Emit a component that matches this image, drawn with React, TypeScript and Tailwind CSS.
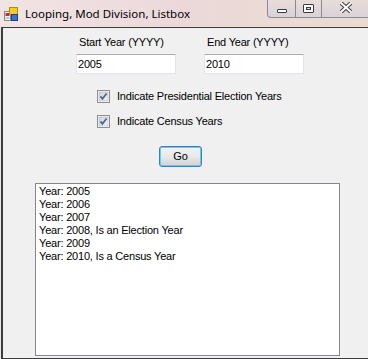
import React from "react";

const ui = { fontFamily: '"Liberation Sans", Arial, sans-serif' };

function AppIcon() {
  return (
    <svg width="14" height="14" viewBox="0 0 14 14" className="shrink-0">
      <rect x="0.5" y="4.5" width="6" height="9" fill="#f4f4f4" stroke="#8a8a8a" />
      <rect x="1.5" y="6" width="4" height="3" fill="#d42a1e" />
      <rect x="1.5" y="10" width="4" height="2" fill="#c8c8c8" />
      <rect x="5.5" y="0.5" width="8" height="7" fill="#f6c928" stroke="#b48a10" />
      <rect x="7.5" y="7.5" width="6" height="6" fill="#3b6fd8" stroke="#1f3f8a" />
    </svg>
  );
}

function CheckBox({ label }: { label: string }) {
  return (
    <div className="flex h-[13px] items-center">
      <svg width="13" height="13" viewBox="0 0 13 13" className="shrink-0">
        <defs>
          <linearGradient id="cbg" x1="0" y1="0" x2="1" y2="1">
            <stop offset="0" stopColor="#cfd2d6" />
            <stop offset="1" stopColor="#f4f5f7" />
          </linearGradient>
        </defs>
        <rect x="0.5" y="0.5" width="12" height="12" fill="#fff" stroke="#8e8f8f" />
        <rect x="2" y="2" width="9" height="9" fill="url(#cbg)" stroke="#aeb3b9" strokeWidth="0.6" />
        <path d="M3.4 6.4 L5.4 8.8 L9.6 3.4" fill="none" stroke="#4c61a0" strokeWidth="1.7" />
      </svg>
      <span className="ml-[7px] text-[11px] leading-[13px] tracking-[-0.2px] text-black">{label}</span>
    </div>
  );
}

function TextField({ value }: { value: string }) {
  return (
    <div className="flex h-[20px] w-[100px] items-center border border-[#e2e3ea] border-t-[#abadb3] bg-white pl-[1px] text-[11px] tracking-[-0.2px] text-black">
      {value}
    </div>
  );
}

const items = [
  "Year: 2005",
  "Year: 2006",
  "Year: 2007",
  "Year: 2008, Is an Election Year",
  "Year: 2009",
  "Year: 2010, Is a Census Year",
];

export default function App() {
  return (
    <div
      className="flex h-[359px] w-[368px] flex-col overflow-hidden bg-gradient-to-r from-[#f1e4e5] via-[#ecd8da] to-[#e9dccf]"
      style={ui}
    >
      <div className="relative flex h-[27px] shrink-0 items-center pl-[4px]">
        <AppIcon />
        <span
          className="ml-[7px] text-[11.5px] text-black"
          style={{ fontFamily: '"Noto Sans", "Open Sans", sans-serif' }}
        >
          Looping, Mod Division, Listbox
        </span>
        <div className="absolute left-[267px] top-0 flex h-[18px] w-[110px] overflow-hidden rounded-b-[4px] border border-t-0 border-[#8a8a90] bg-gradient-to-b from-[#e9dde2]/60 to-[#d2cedb]/70">
          <div className="flex w-[28px] items-center justify-center border-r border-[#8a8a90]">
            <div className="mt-[5px] h-[4px] w-[10px] rounded-[1px] border border-[#3b3b3b] bg-white" />
          </div>
          <div className="flex w-[26px] items-center justify-center border-r border-[#8a8a90]">
            <div className="flex h-[9px] w-[11px] items-center justify-center rounded-[1px] border border-[#3b3b3b] bg-white">
              <div className="h-[3px] w-[5px] border border-[#3b3b3b] bg-[#d8d8d8]" />
            </div>
          </div>
          <div className="flex flex-1 items-start justify-start pl-[18px] pt-[2px]">
            <svg width="12" height="11" viewBox="0 0 12 11">
              <path
                d="M1 1 L11 10 M11 1 L1 10"
                stroke="#3b3b3b"
                strokeWidth="4"
                strokeLinecap="square"
              />
              <path
                d="M1 1 L11 10 M11 1 L1 10"
                stroke="#ffffff"
                strokeWidth="2"
                strokeLinecap="square"
              />
            </svg>
          </div>
        </div>
      </div>

      <div className="flex flex-1 pl-[1px]">
        <div className="flex flex-1 flex-col border-l-2 border-t border-b border-[#3c3c3c] bg-[#f0f0f0] pt-[8px]">
          <div className="ml-[73px] flex gap-[28px]">
            <div className="flex flex-col">
              <span className="pl-[3px] text-[11px] leading-[13px] tracking-[-0.2px] text-black">Start Year (YYYY)</span>
              <div className="mt-[5px]">
                <TextField value="2005" />
              </div>
            </div>
            <div className="flex flex-col">
              <span className="pl-[3px] text-[11px] leading-[13px] tracking-[-0.2px] text-black">End Year (YYYY)</span>
              <div className="mt-[5px]">
                <TextField value="2010" />
              </div>
            </div>
          </div>

          <div className="ml-[94px] mt-[16px] flex flex-col gap-[12px]">
            <CheckBox label="Indicate Presidential Election Years" />
            <CheckBox label="Indicate Census Years" />
          </div>

          <div className="ml-[156px] mt-[18px]">
            <button className="flex h-[21px] w-[43px] items-center justify-center rounded-[3px] border border-[#3c7fb1] bg-gradient-to-b from-[#f4f4f4] via-[#e8e8e8] to-[#d3d3d3] text-[11px] text-black shadow-[inset_0_0_0_1px_#4fd6fa]">
              Go
            </button>
          </div>

          <div className="ml-[32px] mt-[16px] h-[173px] w-[305px] border border-[#828790] bg-white pl-[3px] pt-[1px]">
            {items.map((t) => (
              <div key={t} className="text-[11px] leading-[13px] tracking-[-0.2px] text-black">
                {t}
              </div>
            ))}
          </div>
        </div>
      </div>
    </div>
  );
}
